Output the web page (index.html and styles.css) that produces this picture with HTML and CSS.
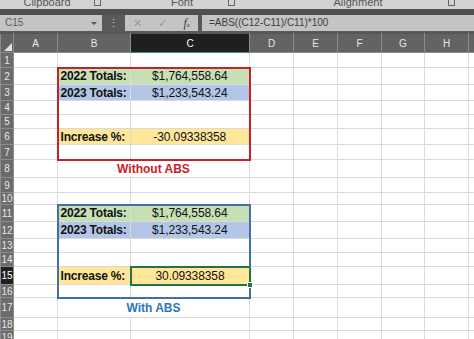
FILE: index.html
```html
<!DOCTYPE html>
<html lang="en">
<head>
    <meta charset="UTF-8">
    <title>ABS example</title>
    <link rel="stylesheet" href="styles.css">
</head>
<body>
    <div class="ribbon">
        <div class="group g1"><span class="label">Clipboard</span><span class="launch"></span></div>
        <div class="group g2"><span class="label">Font</span><span class="launch"></span></div>
        <div class="group g3"><span class="label">Alignment</span><span class="launch"></span></div>
    </div>

    <div class="formula-row">
        <div class="namebox">C15<span class="arrow"></span></div>
        <div class="grip">&#8942;</div>
        <div class="fx-buttons">
            <span class="btn off">&#10005;</span>
            <span class="btn off">&#10003;</span>
            <span class="btn fx"><i>f</i><small>x</small></span>
        </div>
        <div class="formula">=ABS((C12-C11)/C11)*100</div>
    </div>

    <table class="sheet">
        <colgroup>
            <col class="c-hd"><col class="c-a"><col class="c-b"><col class="c-c">
            <col class="c-n"><col class="c-n"><col class="c-n"><col class="c-g"><col class="c-n"><col class="c-i">
        </colgroup>
        <tr class="heads">
            <th class="corner"><span class="tri"></span></th>
            <th>A</th><th>B</th><th class="sel">C</th><th>D</th><th>E</th><th>F</th><th>G</th><th>H</th><th></th>
        </tr>
        <tr class="h15"><th>1</th><td></td><td></td><td></td><td></td><td></td><td></td><td></td><td></td><td></td></tr>
        <tr class="h17"><th>2</th><td></td><td class="lbl green red-t red-l">2022 Totals:</td><td class="val green red-t red-r">$1,764,558.64</td><td></td><td></td><td></td><td></td><td></td><td></td></tr>
        <tr class="h16"><th>3</th><td></td><td class="lbl blue red-l">2023 Totals:</td><td class="val blue red-r">$1,233,543.24</td><td></td><td></td><td></td><td></td><td></td><td></td></tr>
        <tr class="h14"><th>4</th><td></td><td class="red-l"></td><td class="red-r"></td><td></td><td></td><td></td><td></td><td></td><td></td></tr>
        <tr class="h14"><th>5</th><td></td><td class="red-l"></td><td class="red-r"></td><td></td><td></td><td></td><td></td><td></td><td></td></tr>
        <tr class="h16"><th>6</th><td></td><td class="lbl yellow red-l">Increase %:</td><td class="val yellow red-r">-30.09338358</td><td></td><td></td><td></td><td></td><td></td><td></td></tr>
        <tr class="h15"><th>7</th><td></td><td class="red-l red-b"></td><td class="red-r red-b"></td><td></td><td></td><td></td><td></td><td></td><td></td></tr>
        <tr class="h18"><th>8</th><td></td><td colspan="2" class="title red-text">Without ABS</td><td></td><td></td><td></td><td></td><td></td><td></td></tr>
        <tr class="h15"><th>9</th><td></td><td></td><td></td><td></td><td></td><td></td><td></td><td></td><td></td></tr>
        <tr class="h12"><th>10</th><td></td><td></td><td></td><td></td><td></td><td></td><td></td><td></td><td></td></tr>
        <tr class="h17"><th>11</th><td></td><td class="lbl green blue-t blue-l">2022 Totals:</td><td class="val green blue-t blue-r">$1,764,558.64</td><td></td><td></td><td></td><td></td><td></td><td></td></tr>
        <tr class="h17"><th>12</th><td></td><td class="lbl blue blue-l">2023 Totals:</td><td class="val blue blue-r">$1,233,543.24</td><td></td><td></td><td></td><td></td><td></td><td></td></tr>
        <tr class="h14"><th>13</th><td></td><td class="blue-l"></td><td class="blue-r"></td><td></td><td></td><td></td><td></td><td></td><td></td></tr>
        <tr class="h14"><th>14</th><td></td><td class="blue-l"></td><td class="blue-r"></td><td></td><td></td><td></td><td></td><td></td><td></td></tr>
        <tr class="h18"><th class="sel">15</th><td></td><td class="lbl yellow blue-l">Increase %:</td><td class="val yellow active">30.09338358</td><td></td><td></td><td></td><td></td><td></td><td></td></tr>
        <tr class="h13"><th>16</th><td></td><td class="blue-l blue-b"></td><td class="blue-r blue-b"></td><td></td><td></td><td></td><td></td><td></td><td></td></tr>
        <tr class="h20"><th>17</th><td></td><td colspan="2" class="title blue-text">With ABS</td><td></td><td></td><td></td><td></td><td></td><td></td></tr>
        <tr class="h13"><th>18</th><td></td><td></td><td></td><td></td><td></td><td></td><td></td><td></td><td></td></tr>
        <tr class="h14"><th>19</th><td></td><td></td><td></td><td></td><td></td><td></td><td></td><td></td><td></td></tr>
    </table>
</body>
</html>
```

FILE: styles.css
```css
body {
    margin: 0;
    width: 474px;
    height: 339px;
    overflow: hidden;
    background: #555;
    font-family: "Liberation Sans", Arial, sans-serif;
}

/* ribbon group labels, cut off at the top */
.ribbon {
    display: flex;
    height: 9px;
    overflow: hidden;
    background: #d3d3d3;
    border-bottom: 6px solid #505050;
}

.group {
    position: relative;
    display: flex;
    justify-content: center;
    height: 9px;
}

.g1 { width: 104px; padding-right: 10px; box-sizing: border-box; }
.g2 { width: 134px; padding-left: 22px; box-sizing: border-box; }
.g3 { width: 220px; padding-left: 20px; box-sizing: border-box; }

.label {
    font-size: 11px;
    line-height: 11px;
    margin-top: -3px;
    color: #555;
}

.launch {
    position: absolute;
    right: 3px;
    top: 0;
    width: 5px;
    height: 5px;
    border: 1px solid #666;
    border-top: none;
}

.formula-row {
    display: flex;
    align-items: stretch;
    height: 16px;
    background: #595959;
    padding-bottom: 2px;
}

.namebox {
    position: relative;
    width: 102px;
    background: #c4c4c4;
    color: #5c5c5c;
    font-size: 10px;
    line-height: 16px;
    padding-left: 5px;
    box-sizing: border-box;
}

.arrow {
    position: absolute;
    right: 5px;
    top: 7px;
    border-left: 3px solid transparent;
    border-right: 3px solid transparent;
    border-top: 3px solid #555;
}

.grip {
    width: 23px;
    text-align: center;
    color: #ccc;
    font-size: 11px;
    line-height: 16px;
}

.fx-buttons {
    display: flex;
    width: 73px;
    background: #c4c4c4;
    justify-content: space-around;
    align-items: center;
    margin-right: 4px;
}

.btn {
    font-size: 11px;
    color: #9a9a9a;
}

.btn.fx {
    color: #3a3a3a;
    font-family: "Liberation Serif", serif;
    font-size: 12px;
}

.btn.fx small {
    font-size: 7px;
    font-style: italic;
}

.formula {
    flex: 1;
    background: #c4c4c4;
    color: #3c3c3c;
    font-size: 10px;
    line-height: 16px;
    padding-left: 7px;
}

/* the grid */
.sheet {
    border-collapse: collapse;
    table-layout: fixed;
    width: 490px;
    background: #fff;
}

.c-hd { width: 13px; }
.c-a { width: 44px; }
.c-b { width: 73px; }
.c-c { width: 119px; }
.c-n { width: 44px; }
.c-g { width: 43px; }
.c-i { width: 22px; }

.sheet td {
    border: 1px solid #dadada;
    padding: 0;
    font-size: 12px;
    color: #111;
    white-space: nowrap;
    overflow: hidden;
}

.sheet th {
    background: #6b6b6b;
    color: #e8e8e8;
    font-weight: normal;
    font-size: 10px;
    padding: 0;
    border: 1px solid #8c8c8c;
    overflow: hidden;
}

.heads th {
    height: 18px;
    background: #636363;
    border-color: #555 #8c8c8c #8c8c8c #8c8c8c;
}

.sheet th.sel {
    background: #1f1f1f;
    color: #fff;
}

.heads th.sel {
    border-bottom: 1px solid #3f8f5f;
}

.corner {
    position: relative;
}

.tri {
    position: absolute;
    right: 1px;
    bottom: 1px;
    border-left: 8px solid transparent;
    border-bottom: 8px solid #e4e4e4;
}

.h12 { height: 12px; }
.h13 { height: 13px; }
.h14 { height: 14px; }
.h15 { height: 15px; }
.h16 { height: 16px; }
.h17 { height: 17px; }
.h18 { height: 18px; }
.h20 { height: 20px; }

.sheet td.lbl {
    font-weight: bold;
    padding-left: 2px;
    letter-spacing: -0.2px;
}

.sheet td.val {
    text-align: center;
    letter-spacing: -0.1px;
}

.green { background: #c6e0b4; }
.blue { background: #b4c6e7; }
.yellow { background: #ffe699; }

.sheet td.red-t { border-top: 2px solid #c8202a; }
.sheet td.red-b { border-bottom: 2px solid #c8202a; }
.sheet td.red-l { border-left: 2px solid #c8202a; }
.sheet td.red-r { border-right: 2px solid #c8202a; }

.sheet td.blue-t { border-top: 2px solid #41719c; }
.sheet td.blue-b { border-bottom: 2px solid #41719c; }
.sheet td.blue-l { border-left: 2px solid #41719c; }
.sheet td.blue-r { border-right: 2px solid #41719c; }

.sheet td.title {
    text-align: center;
    font-weight: bold;
}

.sheet td.red-text { color: #c8202a; }
.sheet td.blue-text { color: #2e75b6; }

.sheet td.active {
    position: relative;
    border: 2px solid #217346;
    overflow: visible;
}

.sheet td.active::after {
    content: "";
    position: absolute;
    right: -4px;
    bottom: -4px;
    width: 4px;
    height: 4px;
    background: #217346;
    border: 1px solid #fff;
}
```
